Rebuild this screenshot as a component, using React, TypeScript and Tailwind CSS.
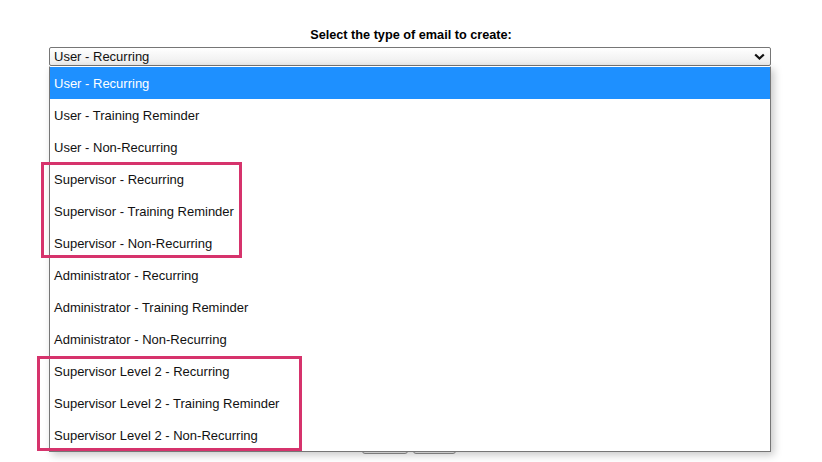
import { useState } from "react";

const options = [
    "User - Recurring",
    "User - Training Reminder",
    "User - Non-Recurring",
    "Supervisor - Recurring",
    "Supervisor - Training Reminder",
    "Supervisor - Non-Recurring",
    "Administrator - Recurring",
    "Administrator - Training Reminder",
    "Administrator - Non-Recurring",
    "Supervisor Level 2 - Recurring",
    "Supervisor Level 2 - Training Reminder",
    "Supervisor Level 2 - Non-Recurring",
];

const App = () => {
    const [selected, setSelected] = useState(0);

    return (
        <div className="relative w-[822px] h-[462px] bg-white overflow-hidden font-['Liberation_Sans',Arial,sans-serif] text-black">
            {/* Titulo */}
            <div className="pt-[28px] text-center text-[12.7px] font-bold leading-[14px]">
                Select the type of email to create:
            </div>

            {/* Select cerrado */}
            <div className="ml-[49px] mt-[5px] w-[722px] h-[19px] flex items-center justify-between border border-[#767676] rounded-[2px] bg-gradient-to-b from-white to-[#ececec] pl-[4px] pr-[5px]">
                <span className="text-[13px] leading-[15px] text-[#111]">{options[selected]}</span>
                <svg width="11" height="8" viewBox="0 0 11 8" className="mt-[1px]">
                    <path d="M1.2 1.5 L5.5 5.6 L9.8 1.5" fill="none" stroke="#111" strokeWidth="2.2" />
                </svg>
            </div>

            {/* Botones (tapados por la lista) */}
            <div className="flex justify-center gap-[5px] mt-[368px] ml-[-5px]">
                <button className="w-[46px] h-[20px] border border-[#8f8f8f] rounded-[3px] bg-[#efefef]" />
                <button className="w-[43px] h-[20px] border border-[#8f8f8f] rounded-[3px] bg-[#efefef]" />
            </div>

            {/* Lista desplegada */}
            <div className="absolute left-[49px] top-[66px] w-[722px] border border-[#767676] border-t-white bg-white shadow-[3px_3px_8px_rgba(0,0,0,0.22)]">
                {options.map((opt, i) => (
                    <div
                        key={opt}
                        onClick={() => setSelected(i)}
                        className={
                            i === selected
                                ? "h-[32px] flex items-center pl-[4px] pt-[1px] text-[13px] bg-[#1e90ff] text-white"
                                : "h-[32px] flex items-center pl-[4px] pt-[1px] text-[13px] text-[#111]"
                        }
                    >
                        {opt}
                    </div>
                ))}
            </div>

            {/* Recuadros de resaltado */}
            <div className="absolute left-[41px] top-[162px] w-[201px] h-[96px] border-[3px] border-[#d6336c]" />
            <div className="absolute left-[37px] top-[356px] w-[265px] h-[95px] border-[3px] border-[#d6336c]" />
        </div>
    );
};

export default App;
